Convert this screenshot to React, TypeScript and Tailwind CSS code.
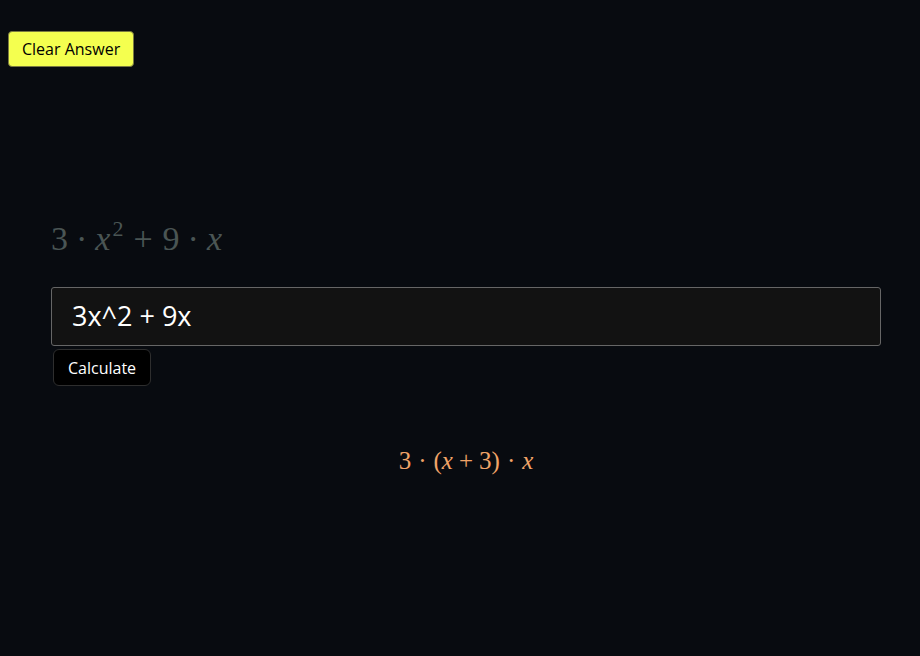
import React from "react";

export default function App() {
  return (
    <div className="min-h-[656px] w-full bg-[#080b10] relative" style={{ fontFamily: '"Open Sans", "Noto Sans", sans-serif' }}>
      <div className="pt-[31px] pl-2">
        <button className="h-[36px] px-[13px] bg-[#f4ff4f] border border-[#7a7a40] rounded-[4px] text-[16px] text-black leading-none">
          Clear Answer
        </button>
      </div>
      <div className="pl-[51px] pr-[39px] pt-[155px]">
        <div className="text-[34px] text-[#4a5554] leading-none h-[50px] whitespace-nowrap" style={{ fontFamily: '"Liberation Serif", serif' }}>
          <span>3</span>
          <span className="mx-[8px]">·</span>
          <i>x</i>
          <span className="text-[22px] relative -top-[14px] ml-[2px]">2</span>
          <span className="mx-[10px]">+</span>
          <span>9</span>
          <span className="mx-[8px]">·</span>
          <i>x</i>
        </div>
        <div className="mt-[15px] h-[59px] bg-[#121212] border border-[#666] rounded-[3px] flex items-center pl-[20px] text-[27px] text-white">
          3x^2 + 9x
        </div>
        <button className="mt-[3px] ml-[2px] h-[37px] px-[14px] bg-black border border-[#2e2e2e] rounded-[6px] text-[16px] text-white">
          Calculate
        </button>
        <div className="mt-[56px] text-center text-[25px] text-[#f0a468] whitespace-nowrap" style={{ fontFamily: '"Liberation Serif", serif' }}>
          <span>3</span>
          <span className="mx-[7px]">·</span>
          <span>(</span>
          <i>x</i>
          <span className="mx-[6px]">+</span>
          <span>3)</span>
          <span className="mx-[7px]">·</span>
          <i>x</i>
        </div>
      </div>
    </div>
  );
}
